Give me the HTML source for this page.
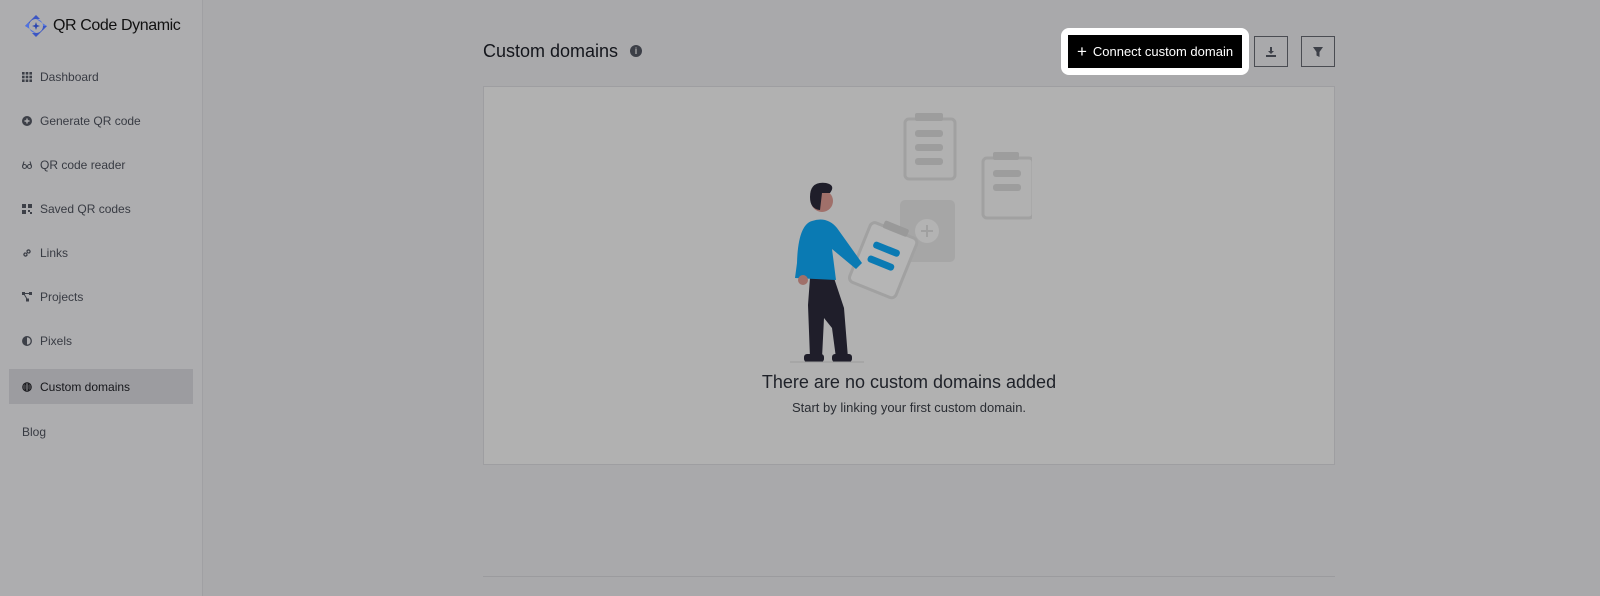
<!DOCTYPE html>
<html><head><meta charset="utf-8"><style>
*{box-sizing:border-box;margin:0;padding:0}
body{width:1600px;height:596px;background:#a9a9ab;font-family:"Liberation Sans",sans-serif;position:relative;overflow:hidden}
.side{position:absolute;left:0;top:0;width:203px;height:596px;background:#adadaf;border-right:1px solid #a0a0a3}
.logo{position:absolute;left:24px;top:14px;display:flex;align-items:center;gap:5px;font-size:16px;color:#111;letter-spacing:-0.4px}
.nav{position:absolute;left:9px;width:184px;height:35px;display:flex;align-items:center;padding-left:13px;font-size:12px;color:#383b43;gap:8px}
.nav .ic{width:10px;height:10px;display:inline-block}
.act{background:#9c9ca0;color:#15161a}
.title{position:absolute;left:483px;top:41px;font-size:18px;color:#14161c}
.info{position:absolute;left:630px;top:45px;width:12px;height:12px;border-radius:50%;background:#3c3f47;color:#aaa;font-size:9px;text-align:center;line-height:12px;font-weight:bold}
.hl{position:absolute;left:1061px;top:28px;width:188px;height:47px;background:#fff;border-radius:8px}
.btn{position:absolute;left:1068px;top:35px;width:174px;height:33px;background:#000;color:#fff;font-size:13px;display:flex;align-items:center;justify-content:center;gap:6px}
.sq{position:absolute;top:36px;width:34px;height:31px;border:1.5px solid #4a4c52;display:flex;align-items:center;justify-content:center}
.card{position:absolute;left:483px;top:86px;width:852px;height:379px;background:#b1b1b1;border:1.5px solid #9e9ea1}
.line{position:absolute;left:483px;top:576px;width:852px;height:1px;background:#9b9b9e}
</style></head><body>
<div class="side">
 <div class="logo"><svg width="24" height="24" viewBox="0 0 24 24"><path d="M12 1 L16 5 L12 5 A7 7 0 0 0 5 12 L1 12 Z" fill="#3b56c4"/><path d="M23 12 L19 16 L19 12 A7 7 0 0 0 12 5 Z" fill="#4f72e0" opacity=".9"/><path d="M12 23 L8 19 L12 19 A7 7 0 0 0 19 12 L23 12 Z" fill="#3b56c4"/><path d="M1 12 L5 8 L5 12 A7 7 0 0 0 12 19 Z" fill="#4f72e0"/><path d="M12 8 L13 11 L16 12 L13 13 L12 16 L11 13 L8 12 L11 11Z" fill="#2b46b0"/></svg>QR Code Dynamic</div>
 <div class="nav" style="top:59px"><svg class="ic" viewBox="0 0 10 10" fill="#3d4048"><rect x="0" y="0" width="2.6" height="2.6"/><rect x="3.7" y="0" width="2.6" height="2.6"/><rect x="7.4" y="0" width="2.6" height="2.6"/><rect x="0" y="3.7" width="2.6" height="2.6"/><rect x="3.7" y="3.7" width="2.6" height="2.6"/><rect x="7.4" y="3.7" width="2.6" height="2.6"/><rect x="0" y="7.4" width="2.6" height="2.6"/><rect x="3.7" y="7.4" width="2.6" height="2.6"/><rect x="7.4" y="7.4" width="2.6" height="2.6"/></svg>Dashboard</div>
 <div class="nav" style="top:103px"><svg class="ic" viewBox="0 0 10 10"><circle cx="5" cy="5" r="5" fill="#3d4048"/><path d="M5 2.5V7.5M2.5 5H7.5" stroke="#adadaf" stroke-width="1.4"/></svg>Generate QR code</div>
 <div class="nav" style="top:147px"><svg class="ic" viewBox="0 0 10 10" fill="none" stroke="#3d4048" stroke-width="1.1"><circle cx="2.5" cy="6.5" r="2"/><circle cx="7.5" cy="6.5" r="2"/><path d="M4.5 6.5h1M0.5 6.5L2 1.5M9.5 6.5L8 1.5"/></svg>QR code reader</div>
 <div class="nav" style="top:191px"><svg class="ic" viewBox="0 0 10 10" fill="#3d4048"><rect x="0" y="0" width="4" height="4"/><rect x="6" y="0" width="4" height="4"/><rect x="0" y="6" width="4" height="4"/><rect x="6" y="6" width="2" height="2"/><rect x="8" y="8" width="2" height="2"/></svg>Saved QR codes</div>
 <div class="nav" style="top:235px"><svg class="ic" viewBox="0 0 10 10" fill="none" stroke="#3d4048" stroke-width="1.3"><path d="M4 6L6 4M3.5 4.5L2 6a1.6 1.6 0 0 0 2 2l1.5-1.5M6.5 5.5L8 4a1.6 1.6 0 0 0-2-2L4.5 3.5"/></svg>Links</div>
 <div class="nav" style="top:279px"><svg class="ic" viewBox="0 0 10 10" fill="#3d4048"><rect x="0" y="0" width="3" height="3"/><rect x="7" y="0" width="3" height="3"/><rect x="4" y="6.5" width="3" height="3"/><path d="M2 2L5 7M3 1.5H7" stroke="#3d4048" stroke-width="1"/></svg>Projects</div>
 <div class="nav" style="top:323px"><svg class="ic" viewBox="0 0 10 10"><circle cx="5" cy="5" r="4.3" fill="none" stroke="#3d4048" stroke-width="1.3"/><path d="M5 0.7A4.3 4.3 0 0 0 5 9.3Z" fill="#3d4048"/></svg>Pixels</div>
 <div class="nav act" style="top:369px"><svg class="ic" viewBox="0 0 10 10" fill="none" stroke="#1a1a1e" stroke-width="1"><circle cx="5" cy="5" r="4.3"/><ellipse cx="5" cy="5" rx="2" ry="4.3"/><path d="M0.7 5H9.3M1.5 3H8.5M1.5 7H8.5"/></svg>Custom domains</div>
 <div class="nav" style="top:414px;padding-left:13px">Blog</div>
</div>
<div class="title">Custom domains</div><div class="info">i</div>
<div class="hl"></div>
<div class="btn"><span style="font-size:17px;line-height:1">+</span>Connect custom domain</div>
<div class="sq" style="left:1254px"><svg width="12" height="12" viewBox="0 0 12 12" fill="#3d4048"><path d="M5 1h2v4h2L6 8 3 5h2z"/><rect x="1" y="9" width="10" height="2"/></svg></div>
<div class="sq" style="left:1301px"><svg width="12" height="12" viewBox="0 0 12 12" fill="#3d4048"><path d="M1 1h10L7.5 6v5l-3-1.5V6z"/></svg></div>
<div class="card">
<svg style="position:absolute;left:288px;top:26px" width="260" height="250" viewBox="0 0 260 250">
 <g fill="none" stroke="#a1a1a1" stroke-width="3">
  <rect x="133" y="6" width="50" height="60" rx="4"/>
  <rect x="211" y="45" width="50" height="60" rx="4"/>
 </g>
 <g fill="#9d9d9d">
  <rect x="143" y="0" width="28" height="8" rx="2"/>
  <rect x="143" y="17" width="28" height="7" rx="3"/><rect x="143" y="31" width="28" height="7" rx="3"/><rect x="143" y="45" width="28" height="7" rx="3"/>
  <rect x="221" y="39" width="26" height="8" rx="2"/>
  <rect x="221" y="57" width="28" height="7" rx="3"/><rect x="221" y="71" width="28" height="7" rx="3"/>
 </g>
 <rect x="128" y="87" width="55" height="62" rx="5" fill="#a6a6a6"/>
 <circle cx="155" cy="118" r="12" fill="#b3b3b3"/><path d="M155 112v12M149 118h12" stroke="#a0a0a0" stroke-width="2"/>
 <g transform="rotate(22 110 150)">
  <rect x="85" y="115" width="50" height="64" rx="5" fill="#b5b5b5" stroke="#a1a1a1" stroke-width="3"/>
  <rect x="97" y="109" width="26" height="8" rx="2" fill="#999"/>
  <rect x="95" y="132" width="28" height="7" rx="3" fill="#0a7ab3"/><rect x="95" y="147" width="28" height="7" rx="3" fill="#0a7ab3"/>
 </g>
 <path d="M36 192 L38 245 L50 245 L52 205 L60 215 L64 245 L76 245 L72 195 L62 165 L38 165 Z" fill="#1f1e2a"/>
 <rect x="32" y="241" width="20" height="8" rx="3" fill="#1f1e2a"/><rect x="60" y="241" width="20" height="8" rx="3" fill="#1f1e2a"/>
 <path d="M18 249H92" stroke="#9a9a9a" stroke-width="1"/>
 <path d="M40 108 Q26 112 25 150 L23 165 L64 167 L60 136 L84 156 L90 150 L65 115 Q55 103 40 108Z" fill="#0a7ab3"/>
 <circle cx="31" cy="167" r="5" fill="#a0706a"/>
 <circle cx="50" cy="88" r="11" fill="#a0706a"/>
 <path d="M38 84 Q38 68 54 70 Q64 72 58 80 L50 80 L48 97 Q38 96 38 84Z" fill="#1f1e2a"/>
</svg>
<div style="position:absolute;left:0;width:100%;top:285px;text-align:center;font-size:18px;color:#1f2229">There are no custom domains added</div>
<div style="position:absolute;left:0;width:100%;top:313px;text-align:center;font-size:13px;color:#2a2d33">Start by linking your first custom domain.</div>
</div>
<div class="line"></div>
</body></html>
